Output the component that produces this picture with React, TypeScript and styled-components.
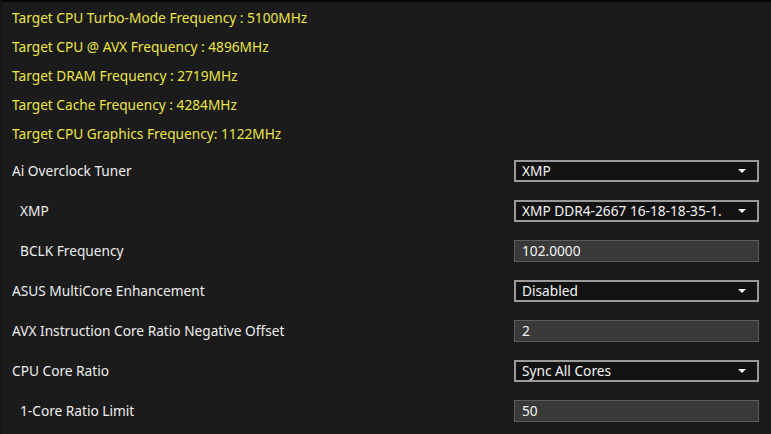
import React from "react";
import styled, { createGlobalStyle } from "styled-components";

const Global = createGlobalStyle`
  html, body { margin: 0; padding: 0; background: #1b1b1b; }
  body { font-family: "Noto Sans", "Open Sans", sans-serif; }
`;

const Page = styled.div`
  width: 771px;
  height: 434px;
  box-sizing: border-box;
  background: #1b1b1b;
  border-top: 2px solid #050505;
  border-left: 2px solid #141414;
  padding-top: 1px;
  overflow: hidden;
`;

const InfoList = styled.div`
  display: flex;
  flex-direction: column;
  padding-left: 10px;
  margin-bottom: 2px;
`;

const InfoLine = styled.div`
  height: 29px;
  line-height: 29px;
  color: #ebe545;
  font-size: 13.7px;
  white-space: nowrap;
`;

const Settings = styled.div`
  display: flex;
  flex-direction: column;
`;

const Row = styled.div`
  display: grid;
  grid-template-columns: 1fr 245px;
  align-items: center;
  height: 40px;
  padding-right: 12px;
`;

const Label = styled.div<{ $indent?: boolean }>`
  color: #ededed;
  font-size: 13.7px;
  padding-left: ${(p) => (p.$indent ? "18px" : "10px")};
  white-space: nowrap;
`;

const Select = styled.div`
  height: 22px;
  box-sizing: border-box;
  border: 2px solid #9a9a9a;
  background: #121212;
  display: flex;
  align-items: center;
  justify-content: space-between;
  padding: 0 11px 0 6px;
  color: #f4f4f4;
  font-size: 13.7px;
  margin-top: 1px;
`;

const SelectText = styled.span`
  white-space: nowrap;
  overflow: hidden;
`;

const Arrow = styled.span`
  width: 0;
  height: 0;
  border-left: 4.5px solid transparent;
  border-right: 4.5px solid transparent;
  border-top: 4.5px solid #f4f4f4;
  flex-shrink: 0;
  margin-left: 6px;
`;

const Input = styled.div`
  height: 22px;
  box-sizing: border-box;
  border: 1px solid #5c5c5c;
  background: #393939;
  display: flex;
  align-items: center;
  padding: 0 7px;
  color: #f4f4f4;
  font-size: 13.7px;
  margin-top: 1px;
`;

const info = [
  "Target CPU Turbo-Mode Frequency : 5100MHz",
  "Target CPU @ AVX Frequency : 4896MHz",
  "Target DRAM Frequency : 2719MHz",
  "Target Cache Frequency : 4284MHz",
  "Target CPU Graphics Frequency: 1122MHz",
];

type Setting = { label: string; indent?: boolean; kind: "select" | "input"; value: string };

const settings: Setting[] = [
  { label: "Ai Overclock Tuner", kind: "select", value: "XMP" },
  { label: "XMP", indent: true, kind: "select", value: "XMP DDR4-2667 16-18-18-35-1." },
  { label: "BCLK Frequency", indent: true, kind: "input", value: "102.0000" },
  { label: "ASUS MultiCore Enhancement", kind: "select", value: "Disabled" },
  { label: "AVX Instruction Core Ratio Negative Offset", kind: "input", value: "2" },
  { label: "CPU Core Ratio", kind: "select", value: "Sync All Cores" },
  { label: "1-Core Ratio Limit", indent: true, kind: "input", value: "50" },
];

export default function App() {
  return (
    <>
      <Global />
      <Page>
        <InfoList>
          {info.map((t) => (
            <InfoLine key={t}>{t}</InfoLine>
          ))}
        </InfoList>
        <Settings>
          {settings.map((s) => (
            <Row key={s.label}>
              <Label $indent={s.indent}>{s.label}</Label>
              {s.kind === "select" ? (
                <Select>
                  <SelectText>{s.value}</SelectText>
                  <Arrow />
                </Select>
              ) : (
                <Input>{s.value}</Input>
              )}
            </Row>
          ))}
        </Settings>
      </Page>
    </>
  );
}
